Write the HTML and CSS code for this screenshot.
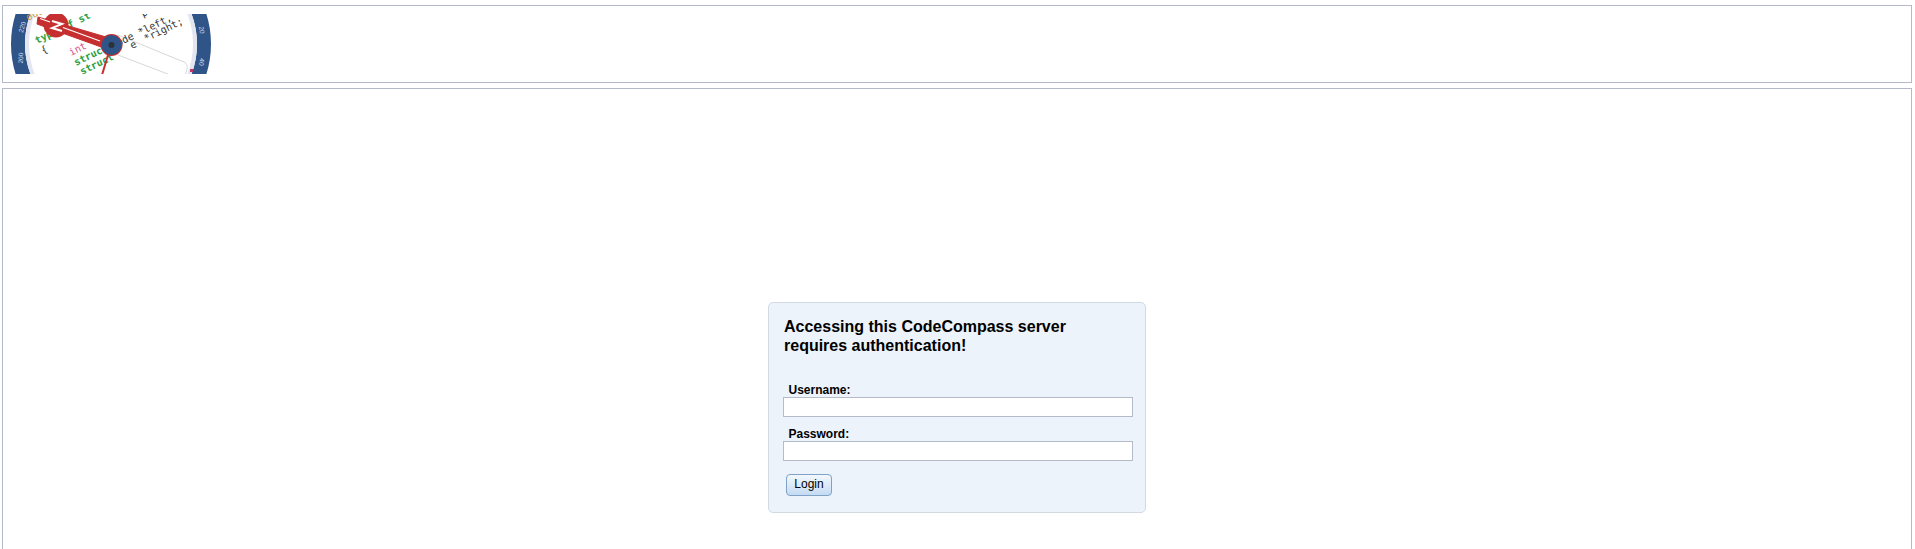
FILE: index.html
```html
<!DOCTYPE html>
<html lang="en">
<head>
<meta charset="utf-8">
<title>CodeCompass</title>
<link rel="stylesheet" href="styles.css">
</head>
<body>
<header class="header">
  <svg class="logo" width="200" height="60" viewBox="11 14 200 60" role="img" aria-label="CodeCompass logo">
    <circle cx="111" cy="44" r="93" fill="none" stroke="#2f5488" stroke-width="14"/>
    <circle cx="111" cy="44" r="84" fill="none" stroke="#e3e6f0" stroke-width="4"/>
    <g class="ticks">
      <text transform="translate(22 27) rotate(-72)">220</text>
      <text transform="translate(20.500 58) rotate(-88)">200</text>
      <text transform="translate(202 30) rotate(82)">20</text>
      <text transform="translate(202 62) rotate(98)">40</text>
    </g>
    <g class="code">
      <text class="kw" transform="translate(28 21) rotate(-26)">ouse</text>
      <text class="ty" transform="translate(37 44) rotate(-26)">typedef st</text>
      <text class="pl" transform="translate(43 54) rotate(-26)">{</text>
      <text class="pk" transform="translate(71 56) rotate(-26)">int</text>
      <text class="ty" transform="translate(76 66) rotate(-26)">struct</text>
      <text class="ty" transform="translate(82 75) rotate(-26)">struct</text>
    </g>
    <path d="M118 35 L184 62 Q188 64 187 69 L185 76 L173 76 L118 55 Z" fill="#fff" stroke="#d8d8d8"/>
    <rect x="190" y="69" width="3" height="3" fill="#c0396b"/>
    <g class="code">
      <text class="pl" transform="translate(113 49) rotate(-26)">node *left,</text>
      <text class="pl" transform="translate(146 42) rotate(-26)">*right;</text>
      <text class="pl" transform="translate(132 49) rotate(-26)">e</text>
      <text class="pl" transform="translate(143 17) rotate(-26)">p</text>
    </g>
    <path d="M108 55 L102 75" stroke="#c9302c" stroke-width="2" fill="none"/>
    <path d="M38 17 L106 37 L104 48 L37 24 Z" fill="#c62f2f" stroke="#c62f2f" stroke-width="1" stroke-linejoin="round"/>
    <circle cx="56" cy="25" r="12.500" fill="#c62f2f"/>
    <path d="M40 18.500 L50 22 M63 27.500 L100 41" stroke="#fff" stroke-width="1.200"/>
    <path d="M52 21 L62 24 L52 28 L62 31" fill="none" stroke="#fff" stroke-width="2"/>
    <circle cx="111.500" cy="45" r="11" fill="#c62f2f"/>
    <circle cx="111.500" cy="45" r="10" fill="#2f5488"/>
    <circle cx="111.500" cy="45" r="3" fill="#2d3138"/>
  </svg>
</header>
<main class="main">
  <form class="dialog">
    <h1 class="title">Accessing this CodeCompass server requires authentication!</h1>
    <label class="label first" for="username">Username:</label>
    <input class="input" id="username" type="text">
    <label class="label" for="password">Password:</label>
    <input class="input" id="password" type="password">
    <button class="button" type="button">Login</button>
  </form>
</main>
</body>
</html>
```
FILE: styles.css
```css
html, body {
  margin: 0;
  height: 100%;
  overflow: hidden;
  background: #fff;
}
body {
  display: flex;
  flex-direction: column;
  gap: 5px;
  padding: 5px 3px 0 2px;
  box-sizing: border-box;
  height: 549px;
  font-family: "Liberation Sans", Arial, sans-serif;
  color: #000;
}
.header {
  flex: none;
  box-sizing: border-box;
  height: 78px;
  padding: 8px;
  border: 1px solid #b5bac9;
  background: #fff;
}
.logo {
  display: block;
}
.ticks text {
  font: 6.500px "Liberation Sans", sans-serif;
  fill: #d5dde9;
  text-anchor: middle;
  dominant-baseline: central;
}
.code text {
  font: 10px "DejaVu Sans Mono", monospace;
}
.code .ty {
  fill: #2d9e3f;
  font-weight: 700;
}
.code .kw {
  fill: #d4a24a;
}
.code .pk {
  fill: #d9508a;
}
.code .pl {
  fill: #333;
}
.main {
  flex: none;
  box-sizing: border-box;
  height: 639px;
  display: flex;
  align-items: center;
  justify-content: center;
  border: 1px solid #b5bac9;
  background: #fff;
}
.dialog {
  box-sizing: border-box;
  width: 378px;
  height: 211px;
  padding: 14px 12px 16px 14px;
  display: flex;
  flex-direction: column;
  align-items: flex-start;
  background: #edf3fa;
  border: 1px solid #d3d9e2;
  border-radius: 5px;
}
.title {
  width: 300px;
  margin: 0 0 0 1px;
  font-size: 16px;
  line-height: 19px;
  font-weight: 700;
}
.label {
  margin-top: 10px;
  padding-left: 5.500px;
  font-size: 12px;
  line-height: 14px;
  font-weight: 700;
}
.label.first {
  margin-top: 28px;
}
.input {
  box-sizing: border-box;
  width: 350px;
  height: 20px;
  margin: 0;
  padding: 0 2px;
  background: #fff;
  border: 1px solid #b5bac9;
  border-radius: 0;
}
.button {
  box-sizing: border-box;
  width: 46px;
  height: 22px;
  margin: 13px 0 0 3px;
  padding: 0 0 2px;
  font: 12px "Liberation Sans", Arial, sans-serif;
  color: #000;
  background: linear-gradient(#f4f8fd, #c4dbf3);
  border: 1px solid #7ea3c6;
  border-radius: 4px;
}
```
